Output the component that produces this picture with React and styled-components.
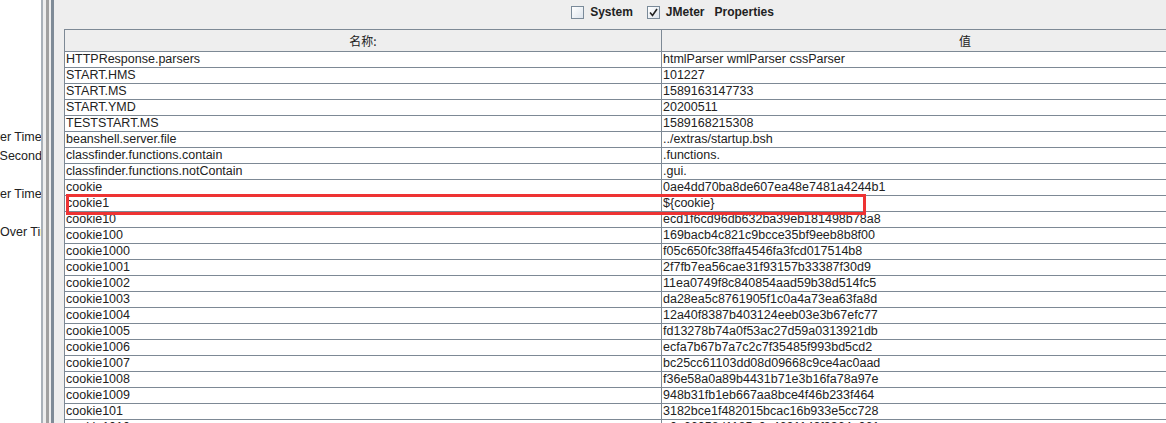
import React from 'react'
import styled, { createGlobalStyle } from 'styled-components'

const Global = createGlobalStyle`
  html, body { margin: 0; padding: 0; background: #fff; }
  body { width: 1166px; height: 423px; overflow: hidden; }
`

const GRID = '#7d8995'

const Frame = styled.div`
  display: flex;
  width: 1166px;
  height: 423px;
  overflow: hidden;
  font-family: "Liberation Sans", Arial, sans-serif;
`

const TreePane = styled.div`
  width: 41px;
  flex-shrink: 0;
  background: #fff;
  overflow: hidden;
  display: flex;
  flex-direction: column;
  padding-top: 128px;
  box-sizing: border-box;
`

const TreeLabel = styled.div`
  height: 19px;
  flex-shrink: 0;
  line-height: 19px;
  font-size: 12.5px;
  color: #222;
  white-space: nowrap;
  margin-left: ${p => p.$shift || 0}px;
`

const Splitter = styled.div`
  width: 13px;
  flex-shrink: 0;
  box-sizing: border-box;
  background: #eeeeee;
  border-left: 2px solid #a9b1b9;
  border-right: 3px solid #7f8b97;
  display: flex;
  justify-content: center;
`

const Grip = styled.div`
  width: 3px;
  height: 100%;
  background-image: radial-gradient(circle, #9a9a9a 0.7px, transparent 0.8px);
  background-size: 2px 2px;
`

const Panel = styled.div`
  width: 1225px;
  flex-shrink: 0;
  background: #eeeeee;
  padding: 0 10px;
  box-sizing: border-box;
  display: flex;
  flex-direction: column;
  overflow: hidden;
`

const OptionBar = styled.div`
  height: 29px;
  flex-shrink: 0;
  display: flex;
  justify-content: center;
  align-items: flex-start;
  padding: 5px 0 0 12px;
  box-sizing: border-box;
  gap: 14px;
`

const Option = styled.label`
  display: flex;
  align-items: center;
  gap: 6px;
  font-size: 12px;
  font-weight: bold;
  color: #222;
  height: 14px;
  white-space: pre;
`

const Box = styled.span`
  width: 11px;
  height: 11px;
  border: 1px solid #7a8a99;
  background: linear-gradient(135deg, #ffffff 0%, #dde4ec 100%);
  display: flex;
  align-items: center;
  justify-content: center;
`

const Table = styled.div`
  position: relative;
  flex-shrink: 0;
  border-left: 1px solid ${GRID};
  border-top: 1px solid ${GRID};
  font-size: 12.5px;
  color: #222;
`

const Row = styled.div`
  display: grid;
  grid-template-columns: 597px 1fr;
  height: ${p => (p.$head ? 22 : 16)}px;
  background: ${p => (p.$head ? '#eeeeee' : '#ffffff')};
`

const Cell = styled.div`
  border-right: 1px solid ${GRID};
  border-bottom: 1px solid ${GRID};
  padding-left: 1px;
  line-height: 15px;
  white-space: nowrap;
  overflow: hidden;
`

const HeadCell = styled(Cell)`
  text-align: center;
  padding-left: 0;
  line-height: 21px;
  font-family: "Noto Sans CJK SC", "Liberation Sans", sans-serif;
  font-size: 12px;
`

const Highlight = styled.div`
  position: absolute;
  left: 1px;
  top: 164px;
  width: 800px;
  height: 21px;
  border: 3px solid #ee3333;
  box-sizing: border-box;
  pointer-events: none;
`

const rows = [
  ['HTTPResponse.parsers', 'htmlParser wmlParser cssParser'],
  ['START.HMS', '101227'],
  ['START.MS', '1589163147733'],
  ['START.YMD', '20200511'],
  ['TESTSTART.MS', '1589168215308'],
  ['beanshell.server.file', '../extras/startup.bsh'],
  ['classfinder.functions.contain', '.functions.'],
  ['classfinder.functions.notContain', '.gui.'],
  ['cookie', '0ae4dd70ba8de607ea48e7481a4244b1'],
  ['cookie1', '${cookie}'],
  ['cookie10', 'ecd1f6cd96db632ba39eb181498b78a8'],
  ['cookie100', '169bacb4c821c9bcce35bf9eeb8b8f00'],
  ['cookie1000', 'f05c650fc38ffa4546fa3fcd017514b8'],
  ['cookie1001', '2f7fb7ea56cae31f93157b33387f30d9'],
  ['cookie1002', '11ea0749f8c840854aad59b38d514fc5'],
  ['cookie1003', 'da28ea5c8761905f1c0a4a73ea63fa8d'],
  ['cookie1004', '12a40f8387b403124eeb03e3b67efc77'],
  ['cookie1005', 'fd13278b74a0f53ac27d59a0313921db'],
  ['cookie1006', 'ecfa7b67b7a7c2c7f35485f993bd5cd2'],
  ['cookie1007', 'bc25cc61103dd08d09668c9ce4ac0aad'],
  ['cookie1008', 'f36e58a0a89b4431b71e3b16fa78a97e'],
  ['cookie1009', '948b31fb1eb667aa8bce4f46b233f464'],
  ['cookie101', '3182bce1f482015bcac16b933e5cc728'],
  ['cookie1010', 'a0e66058d1185c0a4621149f9364a061'],
]

const Check = () => (
  <svg width="9" height="9" viewBox="0 0 9 9">
    <path d="M1 4.5 L3.5 7.5 L8 1" fill="none" stroke="#222" strokeWidth="1.6" />
  </svg>
)

export default function App() {
  return (
    <Frame>
      <Global />
      <TreePane>
        <TreeLabel $shift={-16}>Over Time</TreeLabel>
        <TreeLabel $shift={-22}>per Second</TreeLabel>
        <TreeLabel />
        <TreeLabel $shift={-16}>Over Time</TreeLabel>
        <TreeLabel />
        <TreeLabel $shift={0}>Over Time</TreeLabel>
      </TreePane>
      <Splitter>
        <Grip />
      </Splitter>
      <Panel>
        <OptionBar>
          <Option>
            <Box />
            System
          </Option>
          <Option>
            <Box>
              <Check />
            </Box>
            {'JMeter   Properties'}
          </Option>
        </OptionBar>
        <Table>
          <Row $head>
            <HeadCell>名称:</HeadCell>
            <HeadCell>值</HeadCell>
          </Row>
          {rows.map(([k, v]) => (
            <Row key={k}>
              <Cell>{k}</Cell>
              <Cell>{v}</Cell>
            </Row>
          ))}
          <Highlight />
        </Table>
      </Panel>
    </Frame>
  )
}
